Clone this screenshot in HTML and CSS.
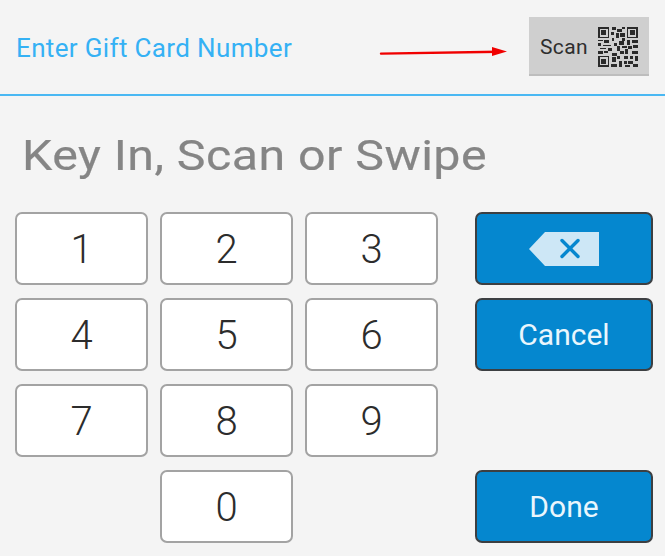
FILE: index.html
```html
<!DOCTYPE html>
<html lang="en">
<head>
<meta charset="utf-8">
<title>Enter Gift Card Number</title>
<link rel="stylesheet" href="styles.css">
</head>
<body>
<div class="screen">
  <header class="header">
    <h1 class="header-title">Enter Gift Card Number</h1>
    <svg class="arrow" width="140" height="16" viewBox="0 0 140 16" aria-hidden="true">
      <path d="M2 9.6 L120 7.8" stroke="#f00000" stroke-width="2.4" stroke-linecap="round" fill="none"/>
      <path d="M113 3 L128 7.5 L113 12 Z" fill="#f00000"/>
    </svg>
    <button class="scan">
      <span>Scan</span>
      <svg class="qr" width="40" height="40" viewBox="0 0 25 25" shape-rendering="crispEdges" aria-hidden="true">
        <g fill="#2a2a2a">
          <path d="M0 0h7v7H0zM1 1v5h5V1zM2 2h3v3H2z" fill-rule="evenodd"/>
          <path d="M18 0h7v7h-7zM19 1v5h5V1zM20 2h3v3h-3z" fill-rule="evenodd"/>
          <path d="M0 18h7v7H0zM1 19v5h5v-5zM2 20h3v3H2z" fill-rule="evenodd"/>
          <path d="M9 0h2v2H9zM12 1h3v2h-3zM15 0h2v1h-2zM8 3h2v2H8zM11 4h2v3h-2zM14 4h3v2h-3zM9 7h1v2H9zM15 7h2v2h-2z"/>
          <path d="M0 8h3v1H0zM4 8h3v2H4zM0 10h2v2H0zM3 11h5v1H3zM1 13h4v1H1zM6 13h3v2H6zM0 15h3v2H0zM4 15h2v1H4z"/>
          <path d="M10 10h2v2h-2zM13 9h3v2h-3zM18 8h2v3h-2zM21 8h4v2h-4zM12 12h2v3h-2zM15 12h3v1h-3zM19 12h2v2h-2zM22 11h3v2h-3zM9 16h3v2H9zM14 15h2v2h-2zM17 14h2v3h-2zM21 15h4v2h-4z"/>
          <path d="M9 19h2v3H9zM12 18h2v2h-2zM8 23h4v2H8zM13 21h2v4h-2zM16 18h3v2h-3zM20 18h2v2h-2zM23 18h2v3h-2zM16 21h2v2h-2zM19 21h3v2h-3zM17 24h3v1h-3zM22 23h3v2h-3z"/>
        </g>
      </svg>
    </button>
  </header>
  <h2 class="prompt"><span class="prompt-text">Key In, Scan or Swipe</span></h2>
  <main class="pad">
    <button class="key">1</button>
    <button class="key">2</button>
    <button class="key">3</button>
    <button class="action">
      <svg class="backspace" width="72" height="36" viewBox="0 0 72 36" aria-hidden="true">
        <path d="M17 1H71V35H17L1 18Z" fill="#cde7f6"/>
        <path d="M34 9.5L50 25.5M50 9.5L34 25.5" stroke="#0587cf" stroke-width="3.4" stroke-linecap="round" fill="none"/>
      </svg>
    </button>
    <button class="key">4</button>
    <button class="key">5</button>
    <button class="key">6</button>
    <button class="action">Cancel</button>
    <button class="key">7</button>
    <button class="key">8</button>
    <button class="key">9</button>
    <div></div>
    <div></div>
    <button class="key">0</button>
    <div></div>
    <button class="action">Done</button>
  </main>
</div>
</body>
</html>
```
FILE: styles.css
```css
* {
  box-sizing: border-box;
}
html, body {
  margin: 0;
  padding: 0;
}
body {
  background: #f4f4f4;
  font-family: Roboto, "Liberation Sans", sans-serif;
}
.screen {
  width: 665px;
  height: 556px;
  overflow: hidden;
}
.header {
  height: 96px;
  border-bottom: 2px solid #4ab8f3;
  display: flex;
  align-items: center;
  padding: 0 16px;
  position: relative;
}
.header-title {
  margin: 0;
  padding-top: 2px;
  flex: 1;
  font-size: 26px;
  font-weight: 400;
  letter-spacing: 0.35px;
  color: #35b1f4;
}
.arrow {
  position: absolute;
  left: 379px;
  top: 44px;
}
.scan {
  width: 120px;
  height: 59px;
  margin-top: -1px;
  border: none;
  border-bottom: 2px solid #bdbdbd;
  background: #cfcfcf;
  display: flex;
  align-items: center;
  justify-content: space-between;
  padding: 2px 11px 0 11px;
  font-family: inherit;
  font-size: 21px;
  letter-spacing: 0.4px;
  color: #2e2e2e;
}
.qr {
  display: block;
  filter: blur(0.5px);
}
.prompt {
  margin: 0;
  height: 116px;
  padding: 30px 0 0 22px;
  font-size: 42px;
  line-height: 60px;
  font-weight: 400;
  color: #858585;
  -webkit-text-stroke: 0.2px #858585;
}
.prompt-text {
  display: inline-block;
  letter-spacing: 0.4px;
  transform: scaleX(1.15);
  transform-origin: left center;
  white-space: nowrap;
}
.pad {
  display: grid;
  grid-template-columns: 133px 133px 133px 203px;
  grid-auto-rows: 73px;
  column-gap: 12px;
  row-gap: 13px;
  padding-left: 15px;
}
.pad .action {
  margin-left: 25px;
}
.key {
  border: 2px solid #a3a3a3;
  border-radius: 7px;
  background: #fff;
  font-family: inherit;
  font-size: 40px;
  font-weight: 300;
  color: #2c2c2c;
  padding: 2px 0 0;
}
.action {
  border: 2px solid #3c3f42;
  border-radius: 7px;
  background: #0587cf;
  font-family: inherit;
  font-size: 30px;
  color: #eaf6fd;
  padding: 0;
  display: flex;
  align-items: center;
  justify-content: center;
}
.backspace {
  display: block;
}
```
